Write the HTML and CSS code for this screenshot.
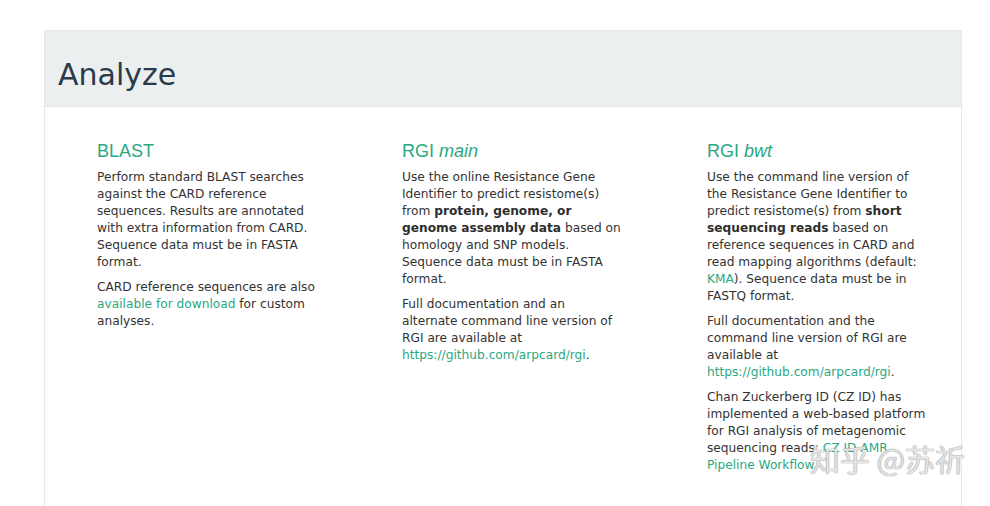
FILE: index.html
```html
<!DOCTYPE html>
<html>
<head>
<meta charset="utf-8">
<link rel="stylesheet" href="styles.css">
</head>
<body>
<div class="page">
  <section class="card">
    <header class="card-head">
      <h1>Analyze</h1>
    </header>
    <div class="card-body">
      <div class="col">
        <h2>BLAST</h2>
        <p>Perform standard BLAST searches against the CARD reference sequences. Results are annotated with extra information from CARD. Sequence data must be in FASTA format.</p>
        <p>CARD reference sequences are also <a href="#">available for download</a> for custom analyses.</p>
      </div>
      <div class="col">
        <h2>RGI <em>main</em></h2>
        <p>Use the online Resistance Gene Identifier to predict resistome(s) from <b>protein, genome, or genome assembly data</b> based on homology and SNP models. Sequence data must be in FASTA format.</p>
        <p>Full documentation and an alternate command line version of RGI are available at <a href="#">https://github.com/arpcard/rgi</a>.</p>
      </div>
      <div class="col">
        <h2>RGI <em>bwt</em></h2>
        <p>Use the command line version of the Resistance Gene Identifier to predict resistome(s) from <b>short sequencing reads</b> based on reference sequences in CARD and read mapping algorithms (default: <a href="#">KMA</a>). Sequence data must be in FASTQ format.</p>
        <p>Full documentation and the command line version of RGI are available at <a href="#">https://github.com/arpcard/rgi</a>.</p>
        <p>Chan Zuckerberg ID (CZ ID) has implemented a web-based platform for RGI analysis of metagenomic sequencing reads: <a href="#">CZ ID AMR Pipeline Workflow</a>.</p>
      </div>
    </div>
  </section>
  <div class="watermark">知乎 @苏祈</div>
</div>
</body>
</html>
```

FILE: styles.css
```css
html, body {
  margin: 0;
  padding: 0;
  background: #ffffff;
}

.page {
  position: relative;
  padding: 30px 26px 0 44px;
  height: 476px;
  overflow: hidden;
}

.card {
  width: 918px;
  border: 1px solid #e6e8e9;
  border-bottom: none;
  height: 480px;
  box-sizing: border-box;
}

.card-head {
  background: #eceff0;
  border-bottom: 1px solid #e3e6e7;
  height: 76px;
  box-sizing: border-box;
  padding: 0 13px;
  display: flex;
  align-items: center;
}

.card-head h1 {
  margin: 0;
  font-family: "DejaVu Sans", Verdana, sans-serif;
  font-weight: normal;
  font-size: 30px;
  color: #2b3a4a;
  position: relative;
  top: 6px;
}

.card-body {
  display: grid;
  grid-template-columns: 305px 305px 225px;
  padding: 33px 0 0 52px;
}

.col {
  width: 222px;
}

.col h2 {
  margin: 0 0 7px;
  font-family: "Liberation Sans", Arial, sans-serif;
  font-weight: normal;
  font-size: 18px;
  line-height: 22px;
  color: #2aa882;
}

.col h2 em {
  font-style: italic;
}

.col p {
  margin: 0 0 8px;
  font-family: "DejaVu Sans", Verdana, sans-serif;
  font-size: 12.2px;
  line-height: 17px;
  color: #333333;
}

.col p b {
  font-weight: bold;
  color: #2e2e2e;
}

.col a {
  color: #2aa882;
  text-decoration: none;
}

.watermark {
  position: absolute;
  left: 810px;
  top: 438px;
  font-family: "Noto Sans CJK SC", sans-serif;
  font-size: 30px;
  line-height: 40px;
  color: rgba(255, 255, 255, 0.75);
  text-shadow: 0 0 1px #8f8f8f, 0 0 1px #8f8f8f;
  white-space: nowrap;
}
```
